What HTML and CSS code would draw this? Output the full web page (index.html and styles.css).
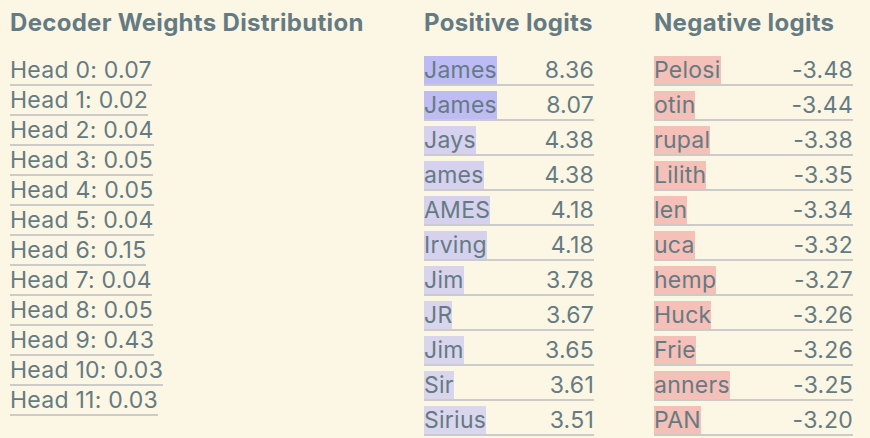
FILE: index.html
```html
<!DOCTYPE html>
<html>
<head>
<meta charset="utf-8">
<link rel="stylesheet" href="styles.css">
</head>
<body>
<div class="page">
  <section class="col col-heads">
    <h2 class="title">Decoder Weights Distribution</h2>
    <div class="heads">
      <div><span class="head">Head 0: 0.07</span></div>
      <div><span class="head">Head 1: 0.02</span></div>
      <div><span class="head">Head 2: 0.04</span></div>
      <div><span class="head">Head 3: 0.05</span></div>
      <div><span class="head">Head 4: 0.05</span></div>
      <div><span class="head">Head 5: 0.04</span></div>
      <div><span class="head">Head 6: 0.15</span></div>
      <div><span class="head">Head 7: 0.04</span></div>
      <div><span class="head">Head 8: 0.05</span></div>
      <div><span class="head">Head 9: 0.43</span></div>
      <div><span class="head">Head 10: 0.03</span></div>
      <div><span class="head">Head 11: 0.03</span></div>
    </div>
  </section>
  <section class="col col-pos">
    <h2 class="title">Positive logits</h2>
    <div class="logits">
      <div class="row"><span class="tok pos" style="background: rgba(150,150,255,0.62)">James</span><span class="val">8.36</span></div>
      <div class="row"><span class="tok pos" style="background: rgba(150,150,255,0.60)">James</span><span class="val">8.07</span></div>
      <div class="row"><span class="tok pos" style="background: rgba(150,150,255,0.38)">Jays</span><span class="val">4.38</span></div>
      <div class="row"><span class="tok pos" style="background: rgba(150,150,255,0.38)">ames</span><span class="val">4.38</span></div>
      <div class="row"><span class="tok pos" style="background: rgba(150,150,255,0.37)">AMES</span><span class="val">4.18</span></div>
      <div class="row"><span class="tok pos" style="background: rgba(150,150,255,0.37)">Irving</span><span class="val">4.18</span></div>
      <div class="row"><span class="tok pos" style="background: rgba(150,150,255,0.35)">Jim</span><span class="val">3.78</span></div>
      <div class="row"><span class="tok pos" style="background: rgba(150,150,255,0.34)">JR</span><span class="val">3.67</span></div>
      <div class="row"><span class="tok pos" style="background: rgba(150,150,255,0.34)">Jim</span><span class="val">3.65</span></div>
      <div class="row"><span class="tok pos" style="background: rgba(150,150,255,0.34)">Sir</span><span class="val">3.61</span></div>
      <div class="row"><span class="tok pos" style="background: rgba(150,150,255,0.33)">Sirius</span><span class="val">3.51</span></div>
    </div>
  </section>
  <section class="col col-neg">
    <h2 class="title">Negative logits</h2>
    <div class="logits">
      <div class="row"><span class="tok neg">Pelosi</span><span class="val">-3.48</span></div>
      <div class="row"><span class="tok neg">otin</span><span class="val">-3.44</span></div>
      <div class="row"><span class="tok neg">rupal</span><span class="val">-3.38</span></div>
      <div class="row"><span class="tok neg">Lilith</span><span class="val">-3.35</span></div>
      <div class="row"><span class="tok neg">len</span><span class="val">-3.34</span></div>
      <div class="row"><span class="tok neg">uca</span><span class="val">-3.32</span></div>
      <div class="row"><span class="tok neg">hemp</span><span class="val">-3.27</span></div>
      <div class="row"><span class="tok neg">Huck</span><span class="val">-3.26</span></div>
      <div class="row"><span class="tok neg">Frie</span><span class="val">-3.26</span></div>
      <div class="row"><span class="tok neg">anners</span><span class="val">-3.25</span></div>
      <div class="row"><span class="tok neg">PAN</span><span class="val">-3.20</span></div>
    </div>
  </section>
</div>
</body>
</html>
```
FILE: styles.css
```css
html, body {
  margin: 0;
  padding: 0;
  background: #fcf6e4;
}
body {
  font-family: Inter, "Noto Sans", sans-serif;
  color: #657b83;
  font-size: 23px;
  letter-spacing: 0.25px;
}
.page {
  display: flex;
  padding-left: 10px;
}
.col-heads { width: 414px; }
.col-pos { width: 170px; }
.col-neg { width: 199px; margin-left: 60px; }
.title {
  font-size: 24px;
  font-weight: 700;
  line-height: 28px;
  letter-spacing: 0.3px;
  margin: 9px 0 19px 0;
  white-space: nowrap;
}
.head {
  display: inline-block;
  line-height: 27px;
  padding-top: 1px;
  border-bottom: 2px solid #cbcbcb;
}
.row {
  display: flex;
  justify-content: space-between;
  align-items: stretch;
  border-bottom: 2px solid #cbcbcb;
  margin-bottom: 5px;
}
.tok, .val {
  line-height: 27px;
  padding-top: 1px;
}
.tok.neg { background: #f4c0b8; }
```
